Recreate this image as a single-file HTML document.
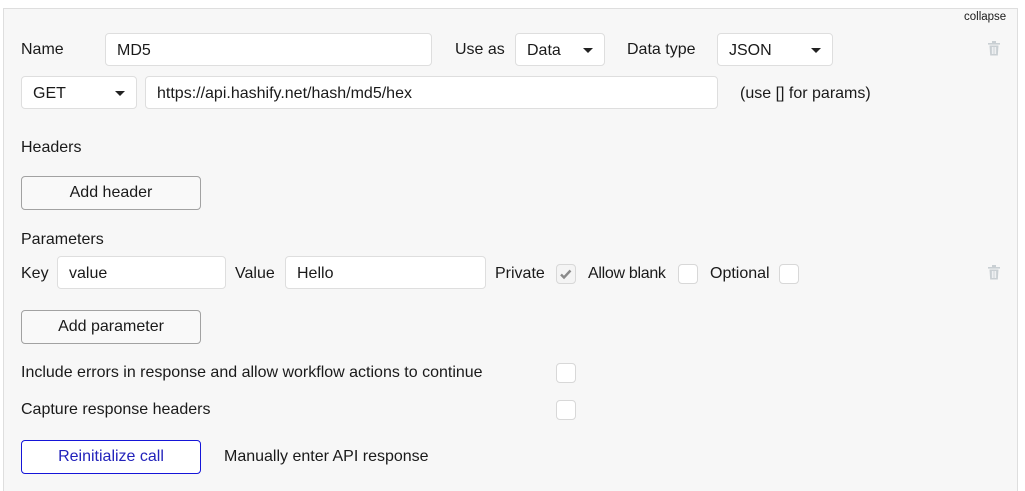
<!DOCTYPE html>
<html><head><style>
*{box-sizing:border-box;margin:0;padding:0}
html,body{width:1025px;height:491px;overflow:hidden}
body{background:#fff;font-family:"Liberation Sans",sans-serif;font-size:16px;color:#1a1a1a;position:relative}
#p{position:absolute;left:3px;top:8px;width:1015px;height:483px;background:#f7f7f7;border:1px solid #dedede;border-bottom:none}
.a{position:absolute;white-space:nowrap}
.in{position:absolute;background:#fff;border:1px solid #dedede;border-radius:4px;height:33px;line-height:33px;padding-left:11px}
.dd:after{content:"";position:absolute;right:11px;top:14px;border-left:5px solid transparent;border-right:5px solid transparent;border-top:5px solid #222}
.btn{position:absolute;border:1px solid #a2a2a2;border-radius:4px;height:34px;line-height:32px;text-align:center;width:180px;background:#f9f9f9}
.cb{position:absolute;width:20px;height:20px;background:#fff;border:1px solid #d8d8d8;border-radius:4px}
.tr{position:absolute;width:12px;height:15px}
</style></head><body>
<div id="p"></div>
<div class="a" style="left:964px;top:11px;font-size:11.5px">collapse</div>
<div class="a" style="left:21px;top:41px">Name</div>
<div class="in" style="left:105px;top:33px;width:327px">MD5</div>
<div class="a" style="left:455px;top:41px">Use as</div>
<div class="in dd" style="left:515px;top:33px;width:90px">Data</div>
<div class="a" style="left:627px;top:41px">Data type</div>
<div class="in dd" style="left:717px;top:33px;width:116px">JSON</div>
<svg class="tr" style="left:988px;top:41px" viewBox="0 0 12 15"><rect x="0" y="2" width="12" height="1.6" fill="#c9cfd3"/><rect x="4" y="0" width="4" height="2" fill="#c9cfd3"/><path d="M1.5 4.5h9l-.7 10H2.2z" fill="#c9cfd3"/><path d="M4.3 6v7M6 6v7M7.7 6v7" stroke="#fff" stroke-width=".8"/></svg>
<div class="in dd" style="left:21px;top:76px;width:116px">GET</div>
<div class="in" style="left:145px;top:76px;width:573px">https://api.hashify.net/hash/md5/hex</div>
<div class="a" style="left:740px;top:85px">(use [] for params)</div>
<div class="a" style="left:21px;top:139px">Headers</div>
<div class="btn" style="left:21px;top:176px">Add header</div>
<div class="a" style="left:21px;top:231px">Parameters</div>
<div class="a" style="left:21px;top:265px">Key</div>
<div class="in" style="left:57px;top:256px;width:169px">value</div>
<div class="a" style="left:235px;top:265px">Value</div>
<div class="in" style="left:285px;top:256px;width:201px">Hello</div>
<div class="a" style="left:495px;top:265px">Private</div>
<div class="cb" style="left:556px;top:264px;background:#f4f4f4"><svg width="18" height="18" viewBox="0 0 18 18"><path d="M4 9.5l3 3 6.5-7" stroke="#8a8a8a" stroke-width="2.4" fill="none"/></svg></div>
<div class="a" style="left:588px;top:265px;letter-spacing:-0.3px">Allow blank</div>
<div class="cb" style="left:678px;top:264px"></div>
<div class="a" style="left:710px;top:265px">Optional</div>
<div class="cb" style="left:779px;top:264px"></div>
<svg class="tr" style="left:988px;top:265px" viewBox="0 0 12 15"><rect x="0" y="2" width="12" height="1.6" fill="#c9cfd3"/><rect x="4" y="0" width="4" height="2" fill="#c9cfd3"/><path d="M1.5 4.5h9l-.7 10H2.2z" fill="#c9cfd3"/><path d="M4.3 6v7M6 6v7M7.7 6v7" stroke="#fff" stroke-width=".8"/></svg>
<div class="btn" style="left:21px;top:310px">Add parameter</div>
<div class="a" style="left:21px;top:364px">Include errors in response and allow workflow actions to continue</div>
<div class="cb" style="left:556px;top:363px"></div>
<div class="a" style="left:21px;top:401px">Capture response headers</div>
<div class="cb" style="left:556px;top:400px"></div>
<div class="btn" style="left:21px;top:440px;border-color:#1515d8;background:#fff;color:#2222bb">Reinitialize call</div>
<div class="a" style="left:224px;top:448px">Manually enter API response</div>
</body></html>
